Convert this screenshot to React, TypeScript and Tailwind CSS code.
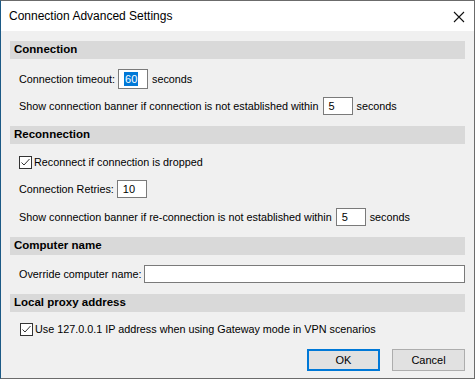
import React from "react";

const font = { fontFamily: '"Liberation Sans", Arial, sans-serif' };

function Header({ children }: { children: React.ReactNode }) {
  return (
    <div className="h-[18px] mx-[9px] bg-[#d9d9d9] pl-[4px] flex items-center text-[11.5px] font-bold text-black leading-none">
      {children}
    </div>
  );
}

function Box({ w, value, h = 18, selected = false }: { w: number; value?: string; h?: number; selected?: boolean }) {
  return (
    <div
      className="border border-[#7a7a7a] bg-white flex items-center pl-[5px] text-[11px] leading-none"
      style={{ width: w, height: h }}
    >
      {selected ? (
        <span className="bg-[#0078d7] text-white px-[1px] h-[14px] flex items-center">{value}</span>
      ) : (
        <span>{value}</span>
      )}
    </div>
  );
}

function Check() {
  return (
    <div className="w-[13px] h-[13px] border border-[#333] bg-white flex items-center justify-center">
      <svg width="11" height="11" viewBox="0 0 11 11">
        <path d="M1.5 5.5 L4 8 L9.5 2" fill="none" stroke="#333" strokeWidth="1" />
      </svg>
    </div>
  );
}

export default function App() {
  return (
    <div className="w-[475px] h-[379px] bg-[#f0f0f0] border border-[#6b6b6b] border-l-[#1c5a86] flex flex-col text-black text-[10.8px]" style={font}>
      <div className="h-[30px] bg-white flex items-center justify-between pl-[8px] pr-[9px] shrink-0">
        <span className="text-[12px]">Connection Advanced Settings</span>
        <svg width="12" height="12" viewBox="0 0 12 12" className="mt-[1px]">
          <path d="M1 1 L11 11 M11 1 L1 11" stroke="#111" strokeWidth="1.1" />
        </svg>
      </div>

      <div className="mt-[10px]"><Header>Connection</Header></div>

      <div className="mt-[10px] ml-[18px] flex items-center h-[20px] gap-[3px]">
        <span>Connection timeout:</span>
        <Box w={30} h={20} value="60" selected />
        <span className="ml-[1px]">seconds</span>
      </div>

      <div className="mt-[8px] ml-[18px] flex items-center h-[18px] gap-[4px]">
        <span>Show connection banner if connection is not established within</span>
        <Box w={30} value="5" />
        <span>seconds</span>
      </div>

      <div className="mt-[11px]"><Header>Reconnection</Header></div>

      <div className="mt-[12px] ml-[18px] flex items-center h-[13px] gap-[2px]">
        <Check />
        <span>Reconnect if connection is dropped</span>
      </div>

      <div className="mt-[11px] ml-[18px] flex items-center h-[18px] gap-[3px]">
        <span>Connection Retries:</span>
        <Box w={30} value="10" />
      </div>

      <div className="mt-[10px] ml-[18px] flex items-center h-[18px] gap-[4px]">
        <span>Show connection banner if re-connection is not established within</span>
        <Box w={30} value="5" />
        <span>seconds</span>
      </div>

      <div className="mt-[11px]"><Header>Computer name</Header></div>

      <div className="mt-[10px] ml-[18px] mr-[9px] flex items-center h-[18px] gap-[3px]">
        <span className="shrink-0">Override computer name:</span>
        <div className="flex-1 h-[18px] border border-[#7a7a7a] bg-white" />
      </div>

      <div className="mt-[11px]"><Header>Local proxy address</Header></div>

      <div className="mt-[11px] ml-[19px] flex items-center h-[13px] gap-[2px]">
        <Check />
        <span>Use 127.0.0.1 IP address when using Gateway mode in VPN scenarios</span>
      </div>

      <div className="mt-[13px] mr-[9px] flex justify-end gap-[12px]">
        <button className="w-[73px] h-[22px] bg-[#e1e1e1] border-2 border-[#0078d7] text-[11px] leading-none">OK</button>
        <button className="w-[73px] h-[22px] bg-[#e1e1e1] border border-[#adadad] text-[11px] leading-none">Cancel</button>
      </div>
    </div>
  );
}
